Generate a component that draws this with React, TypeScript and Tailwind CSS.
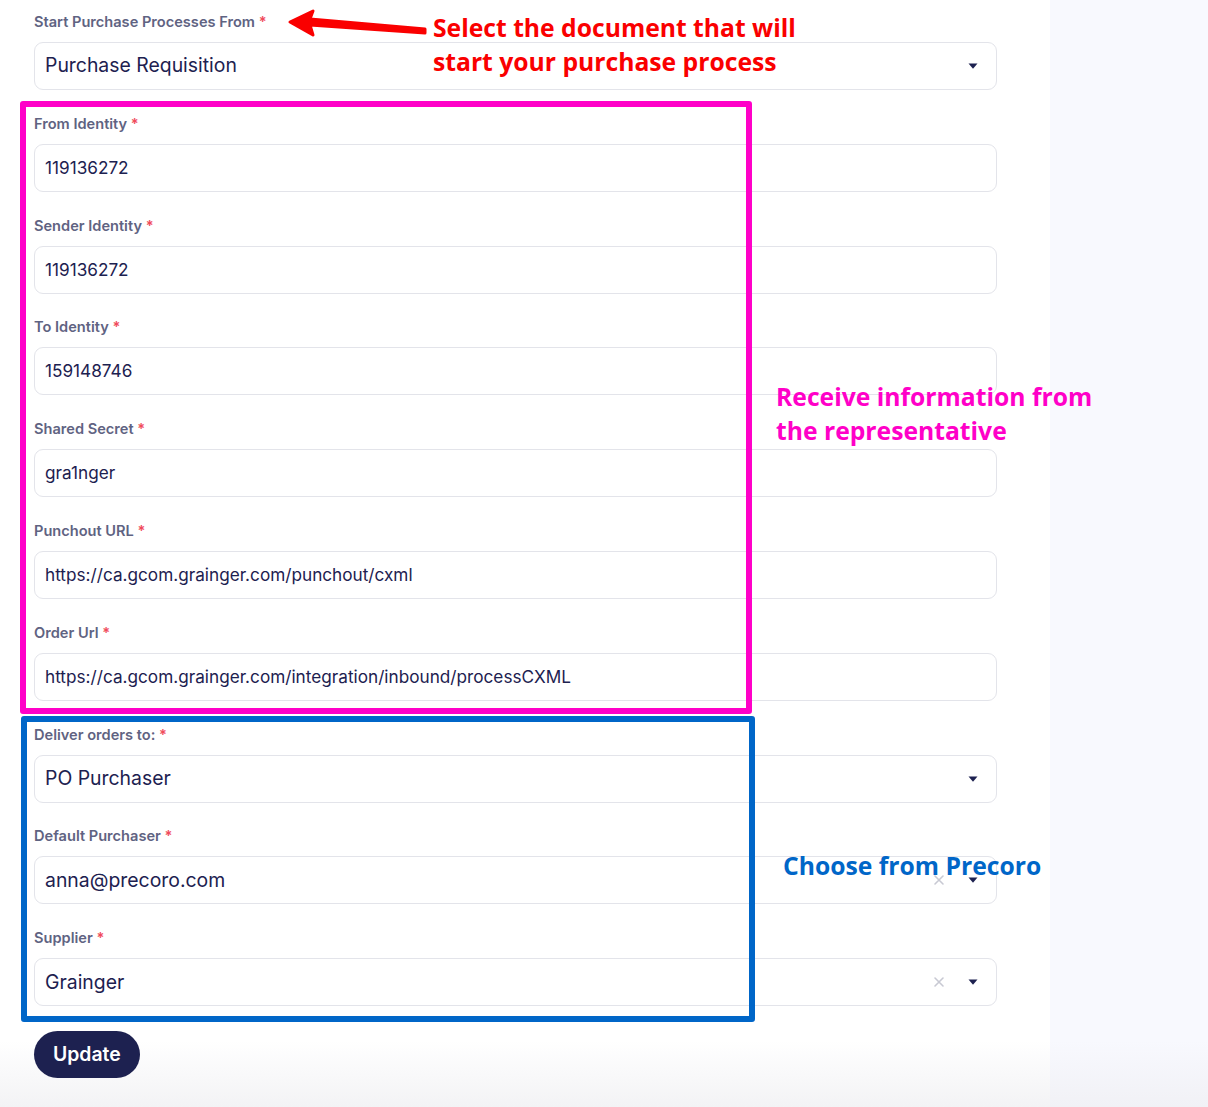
import React from 'react'

type Field = {
  label: string
  value: string
  kind: 'text' | 'select'
  clearable?: boolean
}

const fields: Field[] = [
  { label: 'Start Purchase Processes From', value: 'Purchase Requisition', kind: 'select' },
  { label: 'From Identity', value: '119136272', kind: 'text' },
  { label: 'Sender Identity', value: '119136272', kind: 'text' },
  { label: 'To Identity', value: '159148746', kind: 'text' },
  { label: 'Shared Secret', value: 'gra1nger', kind: 'text' },
  { label: 'Punchout URL', value: 'https://ca.gcom.grainger.com/punchout/cxml', kind: 'text' },
  { label: 'Order Url', value: 'https://ca.gcom.grainger.com/integration/inbound/processCXML', kind: 'text' },
  { label: 'Deliver orders to:', value: 'PO Purchaser', kind: 'select' },
  { label: 'Default Purchaser', value: 'anna@precoro.com', kind: 'select', clearable: true },
  { label: 'Supplier', value: 'Grainger', kind: 'select', clearable: true },
]

function Caret() {
  return (
    <svg width="10" height="6" viewBox="0 0 10 6" className="shrink-0">
      <path d="M0.5 0.5h9L5 5.8z" fill="#1d2150" />
    </svg>
  )
}

function Clear() {
  return (
    <svg width="12" height="12" viewBox="0 0 12 12" className="shrink-0">
      <path d="M2 2l8 8M10 2l-8 8" stroke="#c8c9d3" strokeWidth="1.6" strokeLinecap="round" />
    </svg>
  )
}

function FormField({ field }: { field: Field }) {
  return (
    <div className="mb-[23.8px]">
      <label className="mb-[10px] block h-[20px] text-[14.6px] font-semibold leading-[20px] text-[#5f6382]">
        {field.label} <span className="text-[#f04b5b]">*</span>
      </label>
      <div className="flex h-[48px] w-[963px] items-center rounded-[9px] border border-[#e3e4ea] bg-white pl-[10px] pr-[18px]">
        <span
          className={
            field.kind === 'select'
              ? 'flex-1 text-[19.4px] text-[#1d2150]'
              : 'flex-1 text-[17.2px] text-[#1d2150]'
          }
        >
          {field.value}
        </span>
        {field.clearable && (
          <span className="mr-[23px] flex items-center">
            <Clear />
          </span>
        )}
        {field.kind === 'select' && <Caret />}
      </div>
    </div>
  )
}

function Arrow() {
  return (
    <svg
      width="160"
      height="45"
      viewBox="0 0 160 45"
      className="pointer-events-none absolute left-[280px] top-0"
    >
      <path
        d="M10 22 L33 11 L30 19 L145 29 L145 33 L30 25 L33 35 Z"
        fill="#fa0000"
        stroke="#fa0000"
        strokeWidth="3"
        strokeLinejoin="round"
      />
    </svg>
  )
}

const note = "font-['Open_Sans','Noto_Sans',sans-serif] font-bold text-[24.7px] leading-[34px]"

export default function App() {
  return (
    <div className="relative flex h-[1107px] w-[1208px] overflow-hidden font-['Inter','Noto_Sans',sans-serif]">
      <div className="w-[1050px] bg-[linear-gradient(to_bottom,#ffffff_94%,#f3f3f5)] pl-[34px] pt-[12px]">
        {fields.map((f) => (
          <FormField key={f.label} field={f} />
        ))}
        <button className="mt-[1px] h-[47px] rounded-full bg-[#1d2150] px-[19px] text-[19.4px] font-semibold text-white">
          Update
        </button>
      </div>
      <div className="flex-1 bg-[linear-gradient(to_bottom,#f8f9fe_94%,#f1f1f6)]" />

      {/* annotations */}
      <div className="pointer-events-none absolute left-[20px] top-[101px] h-[613px] w-[732px] rounded-[3px] border-[6px] border-[#ff00c8]" />
      <div className="pointer-events-none absolute left-[21px] top-[716px] h-[306px] w-[734px] rounded-[3px] border-[6px] border-[#0066c8]" />
      <Arrow />
      <div className={`absolute left-[433px] top-[11px] text-[#fa0000] ${note}`}>
        Select the document that will
        <br />
        start your purchase process
      </div>
      <div className={`absolute left-[776px] top-[380px] text-[#ff00c8] ${note}`}>
        Receive information from
        <br />
        the representative
      </div>
      <div className={`absolute left-[783px] top-[849px] text-[#0066c8] ${note}`}>
        Choose from Precoro
      </div>
    </div>
  )
}
